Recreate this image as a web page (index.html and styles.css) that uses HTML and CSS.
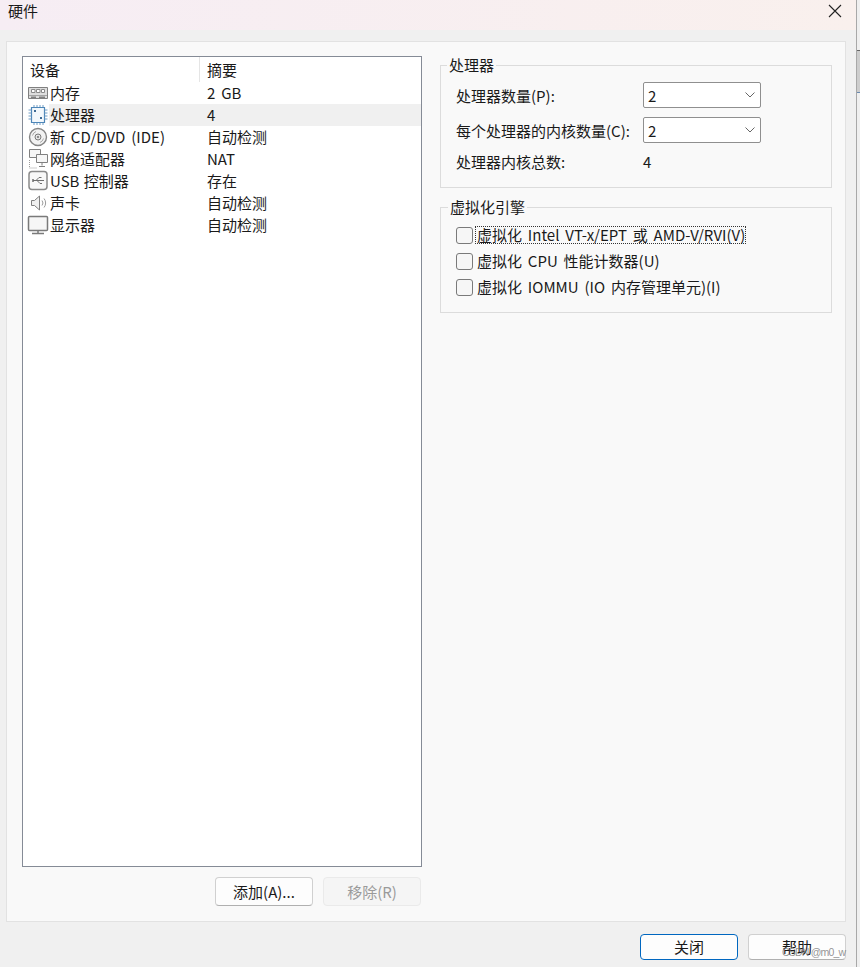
FILE: index.html
```html
<!DOCTYPE html>
<html lang="zh-CN">
<head>
    <meta charset="UTF-8">
    <meta name="viewport" content="width=device-width, initial-scale=1.0">
    <title>硬件</title>
    <link rel="stylesheet" href="styles.css">
</head>
<body>
    <div class="window">
        <div class="title-bar">
            <span class="title">硬件</span>
            <svg class="close-icon" width="14" height="14" viewBox="0 0 14 14"><path d="M1 1l12 12M13 1L1 13" stroke="#222" stroke-width="1.1" fill="none"/></svg>
        </div>

        <div class="panel">
            <div class="left-col">
                <div class="device-list">
                    <div class="list-head">
                        <div class="col-device">设备</div>
                        <div class="col-summary">摘要</div>
                    </div>

                    <div class="row">
                        <svg class="row-icon" width="22" height="22" viewBox="0 0 22 22"><path d="M1.500 5.500h19v11h-19z" fill="#dedede" stroke="#808080"/><path d="M4.500 7.500h3.500v3H4.500zM9.500 7.500h3.500v3H9.500zM14.500 7.500h3v3h-3z" fill="#fff" stroke="#8a8a8a"/><path d="M2 13.500h18" stroke="#a5a5a5"/><path d="M4 15.500h5M12 15.500h6" stroke="#808080" stroke-width="2"/></svg>
                        <span class="col-name">内存</span>
                        <span class="col-value">2 GB</span>
                    </div>
                    <div class="row selected">
                        <svg class="row-icon" width="22" height="22" viewBox="0 0 22 22"><path d="M4.500 3.500h13v15h-13z" fill="#f3f8fc" stroke="#4d86b8" stroke-width="1.200"/><path d="M7 1v2M10 1v2M13 1v2M16 1v2M7 19v2M10 19v2M13 19v2M16 19v2M1.500 6h3M1.500 9h3M1.500 12h3M1.500 15h3M17.500 6h3M17.500 9h3M17.500 12h3M17.500 15h3" stroke="#6f9cc4" fill="none"/><path d="M7 6h2v2H7zM13 13h2v2h-2z" fill="#3d6a94"/></svg>
                        <span class="col-name">处理器</span>
                        <span class="col-value">4</span>
                    </div>
                    <div class="row">
                        <svg class="row-icon" width="22" height="22" viewBox="0 0 22 22"><circle cx="11" cy="11" r="8.500" fill="#f2f2f2" stroke="#858585" stroke-width="1.400"/><circle cx="11" cy="11" r="3" fill="#e4e4e4" stroke="#7a7a7a"/><circle cx="11" cy="11" r=".9" fill="#666"/><path d="M5.500 9.500a6 6 0 0 1 3.500-4M16.500 12.500a6 6 0 0 1-3.500 4" stroke="#a8a8a8" fill="none"/></svg>
                        <span class="col-name">新 CD/DVD (IDE)</span>
                        <span class="col-value">自动检测</span>
                    </div>
                    <div class="row">
                        <svg class="row-icon" width="22" height="22" viewBox="0 0 22 22"><path d="M2.500 1.500h11v8h-11z" fill="#f6f6f6" stroke="#808080"/><path d="M9.500 6.500h11v8h-11z" fill="#f6f6f6" stroke="#808080"/><path d="M15 14.500v3M12 18.500h6" stroke="#808080" fill="none"/><path d="M2.500 12v8h7" stroke="#9a9a9a" stroke-dasharray="1 1" fill="none"/></svg>
                        <span class="col-name">网络适配器</span>
                        <span class="col-value">NAT</span>
                    </div>
                    <div class="row">
                        <svg class="row-icon" width="22" height="22" viewBox="0 0 22 22"><rect x="2" y="1.500" width="18" height="18" rx="3" fill="#f8f8f8" stroke="#8a8a8a" stroke-width="1.500"/><path d="M6 10.500h11M9 10.500l3-3h2.500M10 10.500l3 3h2" stroke="#6e6e6e" fill="none"/><path d="M6 9v3" stroke="#6e6e6e" stroke-width="1.500"/></svg>
                        <span class="col-name usb-name">USB 控制器</span>
                        <span class="col-value">存在</span>
                    </div>
                    <div class="row">
                        <svg class="row-icon" width="22" height="22" viewBox="0 0 22 22"><path d="M4.500 8.500h3l5-4.500v14l-5-4.500h-3z" fill="#f0f0f0" stroke="#808080"/><path d="M15 8.500a4 4 0 0 1 0 5M17 6.500a7 7 0 0 1 0 9" stroke="#9a9a9a" fill="none"/></svg>
                        <span class="col-name">声卡</span>
                        <span class="col-value">自动检测</span>
                    </div>
                    <div class="row">
                        <svg class="row-icon" width="22" height="22" viewBox="0 0 22 22"><rect x="1.500" y="2.500" width="19" height="14" rx="1" fill="#f6f6f6" stroke="#7a7a7a" stroke-width="1.500"/><path d="M11 17v2M5 19.500h12" stroke="#7a7a7a" stroke-width="1.500" fill="none"/></svg>
                        <span class="col-name">显示器</span>
                        <span class="col-value">自动检测</span>
                    </div>
                </div>

                <div class="list-buttons">
                    <button class="btn">添加(A)...</button>
                    <button class="btn btn-disabled">移除(R)</button>
                </div>
            </div>

            <div class="right-col">
                <fieldset class="group group-cpu">
                    <legend>处理器</legend>
                    <div class="field">
                        <label>处理器数量(P):</label>
                        <div class="select"><span>2</span><svg width="10" height="6" viewBox="0 0 10 6"><path d="M.5.500L5 5 9.500.500" stroke="#666" fill="none"/></svg></div>
                    </div>
                    <div class="field">
                        <label>每个处理器的内核数量(C):</label>
                        <div class="select"><span>2</span><svg width="10" height="6" viewBox="0 0 10 6"><path d="M.5.500L5 5 9.500.500" stroke="#666" fill="none"/></svg></div>
                    </div>
                    <div class="field field-total">
                        <label>处理器内核总数:</label>
                        <span class="total">4</span>
                    </div>
                </fieldset>

                <fieldset class="group group-engine">
                    <legend>虚拟化引擎</legend>
                    <div class="check-row"><span class="check"></span><span class="check-label focused">虚拟化 Intel VT-x/EPT 或 AMD-V/RVI(V)</span></div>
                    <div class="check-row"><span class="check"></span><span class="check-label">虚拟化 CPU 性能计数器(U)</span></div>
                    <div class="check-row"><span class="check"></span><span class="check-label">虚拟化 IOMMU (IO 内存管理单元)(I)</span></div>
                </fieldset>
            </div>
        </div>

        <div class="footer">
            <button class="btn btn-primary">关闭</button>
            <button class="btn">帮助</button>
        </div>
    </div>
    <div class="side-strip"><div class="side-block"></div></div>
    <div class="watermark">CSDN @m0_w</div>
</body>
</html>
```

FILE: styles.css
```css
html, body {
    margin: 0;
    height: 100%;
}
body {
    font-family: "Noto Sans CJK SC", "Liberation Sans", sans-serif;
    font-size: 15px;
    word-spacing: 2.5px;
    color: #1a1a1a;
    background: #efefef;
    overflow: hidden;
    display: flex;
}
.window {
    width: 856px;
    height: 967px;
    flex: none;
    background: #f0f0f0;
    border-right: 1px solid #a8a8a8;
    display: flex;
    flex-direction: column;
}
.side-strip {
    flex: 1;
    padding-top: 50px;
}
.side-block {
    height: 41px;
    background: #cdcdcd;
    border-top: 1px solid #666;
    border-bottom: 1px solid #6a8ab0;
}
.title-bar {
    height: 30px;
    flex: none;
    display: flex;
    align-items: center;
    justify-content: space-between;
    padding: 0 14px 0 8px;
    background: linear-gradient(90deg, #f6edf4, #f9f0ed);
}
.title {
    position: relative;
    top: -4px;
    line-height: 20px;
}
.close-icon {
    position: relative;
    top: -4px;
}
.panel {
    flex: none;
    height: 881px;
    margin: 11px 10px 0 6px;
    box-sizing: border-box;
    padding: 14px 13px 15px 15px;
    background: #f9f9f9;
    border: 1px solid #e2e2e2;
    display: flex;
    gap: 18px;
}
.left-col {
    width: 400px;
    flex: none;
    display: flex;
    flex-direction: column;
}
.device-list {
    height: 811px;
    box-sizing: border-box;
    background: #fff;
    border: 1px solid #858b96;
}
.list-head {
    display: flex;
    height: 25px;
    line-height: 25px;
}
.col-device {
    width: 177px;
    box-sizing: border-box;
    padding-left: 7px;
    border-right: 1px solid #e5e5e5;
}
.col-summary {
    padding-left: 7px;
}
.row {
    height: 22px;
    line-height: 22px;
    display: flex;
    align-items: center;
    padding-left: 4px;
}
.row.selected {
    background: linear-gradient(90deg, #fff 26px, #f0f0f0 26px);
}
.row-icon {
    flex: none;
}
.col-name {
    width: 157px;
    flex: none;
    padding-left: 1px;
    white-space: nowrap;
}
.usb-name {
    word-spacing: 1px;
}
.list-buttons {
    margin-top: 10px;
    margin-right: 1px;
    display: flex;
    justify-content: flex-end;
    gap: 10px;
}
.btn {
    width: 98px;
    height: 29px;
    box-sizing: border-box;
    padding: 0;
    font: inherit;
    word-spacing: inherit;
    color: #1a1a1a;
    background: #fdfdfd;
    border: 1px solid #d0d0d0;
    border-bottom-color: #b0b0b0;
    border-radius: 4px;
}
.btn-disabled {
    color: #9a9a9a;
    background: #f5f5f5;
    border-color: #eaeaea;
}
.right-col {
    flex: none;
    width: 392px;
}
.group {
    margin: 0;
    padding: 0;
    box-sizing: border-box;
    border: 1px solid #dcdcdc;
    min-width: 0;
}
.group legend {
    padding: 0 2px;
    line-height: 20px;
}
.group-cpu {
    height: 133px;
    margin-top: -1px;
    padding: 7px 0 0 15px;
}
.group-cpu legend {
    margin-left: -9px;
}
.group-engine {
    height: 116px;
    margin-top: 9px;
    padding: 5px 0 0 15px;
}
.group-engine legend {
    margin-left: -8px;
}
.field {
    display: flex;
    align-items: center;
    height: 26px;
    margin-bottom: 9px;
}
.field label {
    width: 187px;
    flex: none;
    white-space: nowrap;
}
.select {
    width: 118px;
    height: 26px;
    box-sizing: border-box;
    background: #fff;
    border: 1px solid #8f8f8f;
    border-radius: 2px;
    padding: 0 5px 0 4px;
    display: flex;
    align-items: center;
    justify-content: space-between;
}
.field-total {
    margin-top: -4px;
}
.check-row {
    display: flex;
    align-items: center;
    height: 26px;
}
.check {
    width: 15px;
    height: 15px;
    flex: none;
    background: #f6f6f6;
    border: 1px solid #7a7a7a;
    border-radius: 3px;
    margin-right: 2px;
}
.check-label {
    border: 1px dotted transparent;
    line-height: 16px;
    padding: 0 0 0 1px;
    white-space: nowrap;
}
.check-label.focused {
    border-color: #333;
}
.footer {
    flex: none;
    display: flex;
    justify-content: flex-end;
    gap: 10px;
    margin-top: 12px;
    padding-right: 10px;
}
.footer .btn {
    height: 26px;
    line-height: 24px;
}
.btn-primary {
    border: 1px solid #0067c0;
    border-radius: 4px;
}
.watermark {
    position: absolute;
    left: 782px;
    top: 945px;
    font-family: "Liberation Sans", sans-serif;
    font-size: 10.500px;
    letter-spacing: -0.8px;
    word-spacing: 0;
    line-height: 14px;
    color: rgba(120, 120, 120, 0.8);
}
```
